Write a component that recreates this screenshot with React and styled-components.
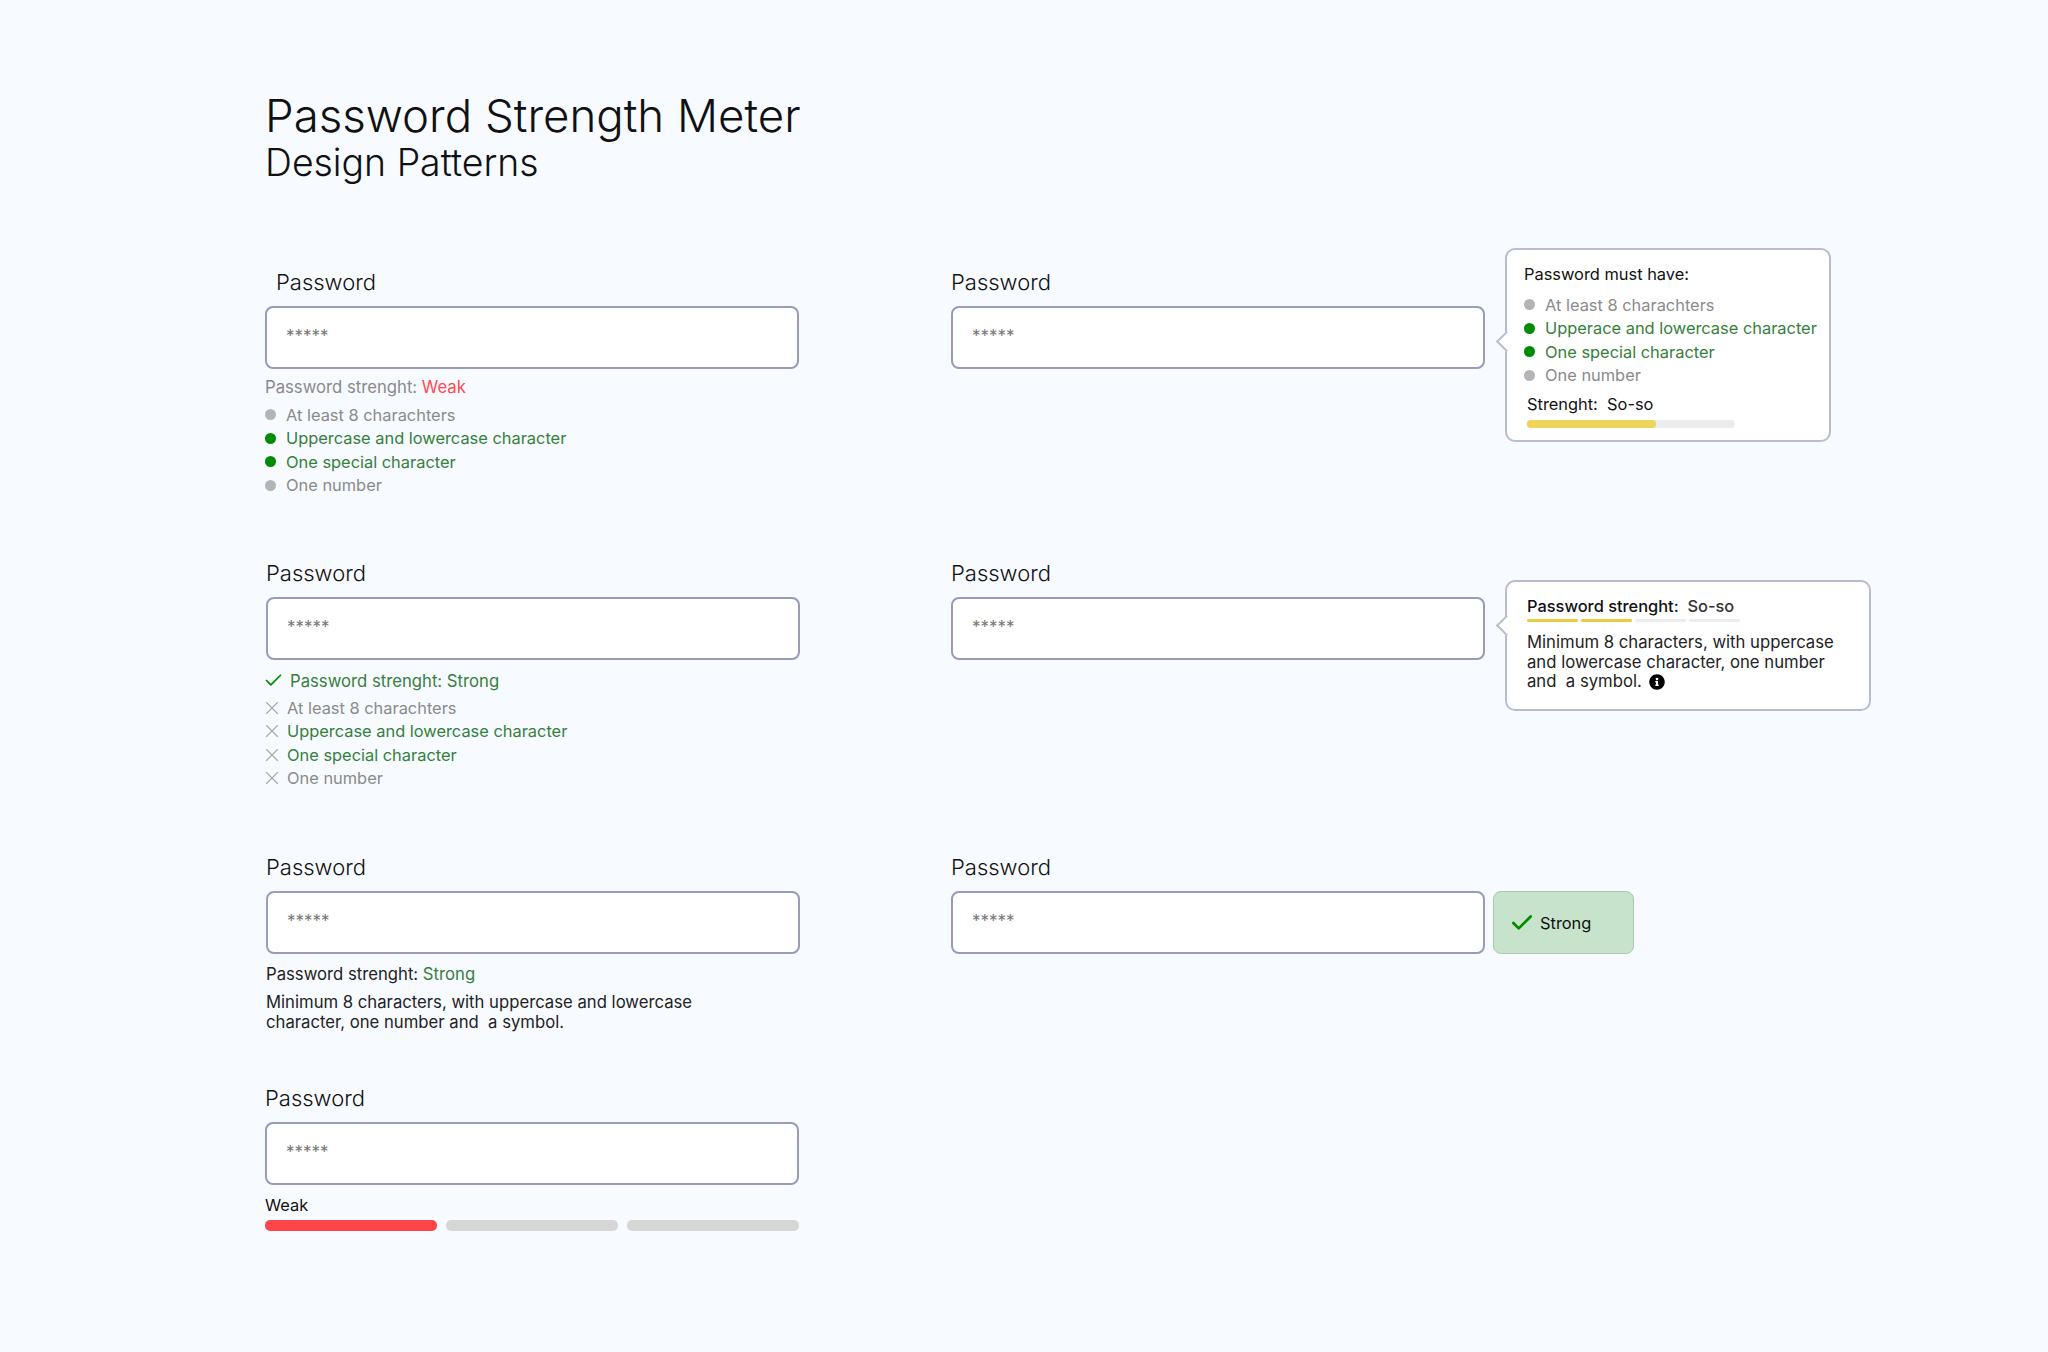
import React from 'react';
import styled, { createGlobalStyle } from 'styled-components';
import { Check, X } from 'lucide-react';
import { FaInfoCircle } from 'react-icons/fa';

const GlobalStyle = createGlobalStyle`
  html, body {
    margin: 0;
    padding: 0;
    background: #f7faff;
  }
  body {
    font-family: Inter, "Noto Sans", sans-serif;
    color: #111;
  }
  * {
    box-sizing: border-box;
  }
`;

const Page = styled.div`
  width: 2048px;
  height: 1352px;
  padding: 89px 0 0 265px;
  overflow: hidden;
`;

const Title = styled.h1`
  margin: 0;
  font-size: 45.6px;
  line-height: 54px;
  font-weight: 300;
`;

const Subtitle = styled.h2`
  margin: 0;
  font-size: 37.4px;
  line-height: 40px;
  font-weight: 300;
`;

const Patterns = styled.div`
  display: grid;
  grid-template-columns: 534px 1fr;
  grid-template-rows: 291px 294px 231px auto;
  column-gap: 152px;
  margin-top: 85px;
`;

const Field = styled.div`
  margin-left: ${(p) => p.$shift || 0}px;
`;

const Label = styled.label`
  display: block;
  margin: 0 0 10px ${(p) => p.$indent || 0}px;
  font-size: 22px;
  line-height: 28px;
  font-weight: 350;
`;

const InputRow = styled.div`
  position: relative;
  display: flex;
  gap: 8px;
`;

const Input = styled.input`
  flex: none;
  width: 534px;
  height: 63px;
  padding: 0 19px 4px;
  background: #fff;
  border: 2px solid #969cb9;
  border-radius: 8px;
  font-family: inherit;
  font-size: 17px;
  outline: none;
  &::placeholder {
    color: #777;
    opacity: 1;
  }
`;

const StatusLine = styled.div`
  display: flex;
  align-items: center;
  gap: ${(p) => p.$gap || 0}px;
  margin-top: ${(p) => p.$top || 8}px;
  font-size: 16.7px;
  line-height: 20px;
  color: ${(p) => p.$color || '#8a8a8a'};
`;

const Emphasis = styled.span`
  color: ${(p) => p.$color};
  white-space: pre;
`;

const ReqList = styled.ul`
  list-style: none;
  margin: ${(p) => p.$top || 6}px 0 0;
  padding: 0;
`;

const ReqItem = styled.li`
  display: flex;
  align-items: center;
  height: 23.5px;
  font-size: 16.4px;
  color: ${(p) => (p.$met ? '#35803a' : '#8a8a8a')};
`;

const Dot = styled.span`
  flex: none;
  width: 11px;
  height: 11px;
  margin-right: 10px;
  border-radius: 50%;
  background: ${(p) => (p.$met ? '#008c00' : '#b2b4b8')};
`;

const CrossIcon = styled(X)`
  flex: none;
  width: 22px;
  height: 22px;
  margin: 0 4px 0 -5px;
  color: #a9a9a9;
`;

const CheckIcon = styled(Check)`
  flex: none;
  width: ${(p) => p.$size}px;
  height: ${(p) => p.$size}px;
  margin-left: -3px;
  color: #008c00;
`;

const Paragraph = styled.p`
  margin: ${(p) => p.$top || 0}px 0 0;
  font-size: 16.7px;
  line-height: 19.5px;
  color: #222;
`;

const Popover = styled.div`
  position: absolute;
  left: 554px;
  top: ${(p) => p.$top}px;
  width: ${(p) => p.$width}px;
  height: ${(p) => p.$height}px;
  padding: ${(p) => p.$padding};
  background: #fff;
  border: 2px solid #b8bcd1;
  border-radius: 10px;

  &::before {
    content: '';
    position: absolute;
    left: -8px;
    top: ${(p) => p.$arrow}px;
    width: 13px;
    height: 13px;
    background: #fff;
    border-left: 2px solid #b8bcd1;
    border-bottom: 2px solid #b8bcd1;
    transform: rotate(45deg);
  }
`;

const PopTitle = styled.div`
  font-size: 16.4px;
  line-height: 20px;
  font-weight: ${(p) => p.$weight || 400};
  color: #111;
  margin: ${(p) => p.$top || 0}px 0 0 ${(p) => p.$indent || 0}px;
  white-space: pre;
`;

const Track = styled.div`
  width: 208px;
  height: 8px;
  margin: 6px 0 0 3px;
  background: #ececec;
  border-radius: 4px;
`;

const Fill = styled.div`
  height: 100%;
  background: #efd35a;
  border-radius: 4px;
`;

const Segments = styled.div`
  display: flex;
  gap: 3px;
  margin-top: 3px;
`;

const Segment = styled.span`
  width: 51px;
  height: 3px;
  border-radius: 2px;
  background: ${(p) => (p.$on ? '#eccb3f' : '#ececec')};
`;

const InfoIcon = styled(FaInfoCircle)`
  margin-left: 7px;
  width: 16px;
  height: 16px;
  color: #000;
  vertical-align: -3px;
`;

const Badge = styled.div`
  display: flex;
  align-items: center;
  gap: 5px;
  width: 141px;
  height: 63px;
  padding: 0 0 0 18px;
  background: #c7e3cb;
  border: 1px solid #a9c9ad;
  border-radius: 8px;
  font-size: 16.4px;
  color: #111;
`;

const WeakLabel = styled.div`
  margin-top: 10px;
  font-size: 16.4px;
  line-height: 20px;
  color: #111;
`;

const Bars = styled.div`
  display: grid;
  grid-template-columns: repeat(3, 1fr);
  gap: 9px;
  margin-top: 5px;
`;

const Bar = styled.span`
  height: 11px;
  border-radius: 5px;
  background: ${(p) => p.$color};
`;

const requirements = [
  { text: 'At least 8 charachters', met: false },
  { text: 'Uppercase and lowercase character', met: true },
  { text: 'One special character', met: true },
  { text: 'One number', met: false },
];

const popoverRequirements = [
  { text: 'At least 8 charachters', met: false },
  { text: 'Upperace and lowercase character', met: true },
  { text: 'One special character', met: true },
  { text: 'One number', met: false },
];

function DotList({ items, top }) {
  return (
    <ReqList $top={top}>
      {items.map((item) => (
        <ReqItem key={item.text} $met={item.met}>
          <Dot $met={item.met} />
          {item.text}
        </ReqItem>
      ))}
    </ReqList>
  );
}

function PasswordInput() {
  return <Input type="text" placeholder="*****" readOnly />;
}

export default function App() {
  return (
    <Page>
      <GlobalStyle />
      <Title>Password Strength Meter</Title>
      <Subtitle>Design Patterns</Subtitle>
      <Patterns>
        <Field>
          <Label $indent={11}>Password</Label>
          <PasswordInput />
          <StatusLine>
            Password strenght:&nbsp;<Emphasis $color="#ff4a50">Weak</Emphasis>
          </StatusLine>
          <DotList items={requirements} />
        </Field>

        <Field>
          <Label>Password</Label>
          <InputRow>
            <PasswordInput />
            <Popover $top={-58} $width={326} $height={194} $padding="14px 10px 0 17px" $arrow={84}>
              <PopTitle>Password must have:</PopTitle>
              <DotList items={popoverRequirements} top={9} />
              <PopTitle $indent={3} $top={7}>Strenght:  So-so</PopTitle>
              <Track>
                <Fill style={{ width: '62%' }} />
              </Track>
            </Popover>
          </InputRow>
        </Field>

        <Field $shift={1}>
          <Label>Password</Label>
          <PasswordInput />
          <StatusLine $top={10} $gap={6}>
            <CheckIcon $size={21} />
            <Emphasis $color="#35803a">Password strenght: Strong</Emphasis>
          </StatusLine>
          <ReqList $top={5}>
            {requirements.map((item) => (
              <ReqItem key={item.text} $met={item.met}>
                <CrossIcon strokeWidth={1.25} />
                {item.text}
              </ReqItem>
            ))}
          </ReqList>
        </Field>

        <Field>
          <Label>Password</Label>
          <InputRow>
            <PasswordInput />
            <Popover $top={-17} $width={366} $height={131} $padding="14px 10px 0 20px" $arrow={36}>
              <PopTitle $weight={500}>
                Password strenght:  <Emphasis $color="#333">So-so</Emphasis>
              </PopTitle>
              <Segments>
                <Segment $on />
                <Segment $on />
                <Segment />
                <Segment />
              </Segments>
              <Paragraph $top={11}>
                Minimum 8 characters, with uppercase
                <br />
                and lowercase character, one number
                <br />
                and&nbsp; a symbol.
                <InfoIcon />
              </Paragraph>
            </Popover>
          </InputRow>
        </Field>

        <Field $shift={1}>
          <Label>Password</Label>
          <PasswordInput />
          <StatusLine $top={10}>
            <Emphasis $color="#222">Password strenght: </Emphasis>
            <Emphasis $color="#35803a">Strong</Emphasis>
          </StatusLine>
          <Paragraph $top={9}>
            Minimum 8 characters, with uppercase and lowercase
            <br />
            character, one number and&nbsp; a symbol.
          </Paragraph>
        </Field>

        <Field>
          <Label>Password</Label>
          <InputRow>
            <PasswordInput />
            <Badge>
              <CheckIcon $size={26} strokeWidth={2.5} />
              Strong
            </Badge>
          </InputRow>
        </Field>

        <Field>
          <Label>Password</Label>
          <PasswordInput />
          <WeakLabel>Weak</WeakLabel>
          <Bars>
            <Bar $color="#ff454a" />
            <Bar $color="#d6d6d6" />
            <Bar $color="#d6d6d6" />
          </Bars>
        </Field>
      </Patterns>
    </Page>
  );
}
